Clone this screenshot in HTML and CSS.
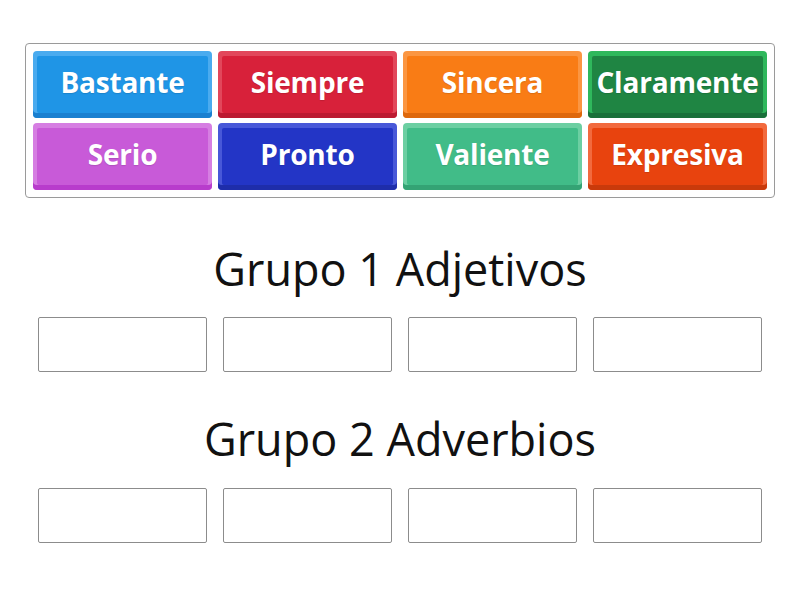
FILE: index.html
```html
<!DOCTYPE html>
<html lang="es">
<head>
<meta charset="utf-8">
<title>Grupos</title>
<link rel="stylesheet" href="styles.css">
</head>
<body>
<div class="bank">
  <div class="tile c-blue"><div class="face">Bastante</div></div>
  <div class="tile c-red"><div class="face">Siempre</div></div>
  <div class="tile c-orange"><div class="face">Sincera</div></div>
  <div class="tile c-dgreen"><div class="face">Claramente</div></div>
  <div class="tile c-purple"><div class="face">Serio</div></div>
  <div class="tile c-navy"><div class="face">Pronto</div></div>
  <div class="tile c-mint"><div class="face">Valiente</div></div>
  <div class="tile c-vermil"><div class="face">Expresiva</div></div>
</div>

<h2 class="group-title first">Grupo 1 Adjetivos</h2>
<div class="slots">
  <div class="slot"></div><div class="slot"></div><div class="slot"></div><div class="slot"></div>
</div>

<h2 class="group-title second">Grupo 2 Adverbios</h2>
<div class="slots">
  <div class="slot"></div><div class="slot"></div><div class="slot"></div><div class="slot"></div>
</div>
</body>
</html>
```

FILE: styles.css
```css
html, body {
  margin: 0;
  padding: 0;
  background: #ffffff;
  font-family: "Open Sans", "Noto Sans", sans-serif;
}

.bank {
  margin: 43px 0 0 25px;
  width: 750px;
  box-sizing: border-box;
  border: 1px solid #9a9a9a;
  border-radius: 4px;
  padding: 7px;
  display: grid;
  grid-template-columns: repeat(4, 179px);
  grid-auto-rows: 67px;
  column-gap: 6px;
  row-gap: 5px;
}

.tile {
  border-radius: 4px;
  padding: 5px 4px 5px 4px;
  box-sizing: border-box;
  display: flex;
  background: var(--rim);
  box-shadow: inset 0 -5px 0 var(--low);
}

.face {
  flex: 1;
  border-radius: 2px;
  background: var(--face);
  display: flex;
  align-items: center;
  justify-content: center;
  padding-bottom: 5px;
  color: #ffffff;
  font-weight: 700;
  font-size: 28px;
  letter-spacing: -0.2px;
  white-space: nowrap;
  text-shadow: 0 1px 1px rgba(0, 0, 0, 0.12);
}

.c-blue   { --rim: #4aabef; --face: #1f95e6; --low: #1a80d0; }
.c-red    { --rim: #e2475b; --face: #d8213a; --low: #bc1a31; }
.c-orange { --rim: #fb9642; --face: #f97c15; --low: #de680c; }
.c-dgreen { --rim: #2fb85c; --face: #1f8543; --low: #19703a; }
.c-purple { --rim: #d67ee2; --face: #c85ad8; --low: #b83ccc; }
.c-navy   { --rim: #4858d8; --face: #2335c6; --low: #1e2daa; }
.c-mint   { --rim: #6ccfa2; --face: #41bc88; --low: #34a374; }
.c-vermil { --rim: #f26a3e; --face: #e8430e; --low: #c93a0b; }

.group-title {
  margin: 0;
  text-align: center;
  font-weight: 400;
  font-size: 45px;
  line-height: 56px;
  color: #111111;
}

.group-title.first { margin-top: 43px; }
.group-title.second { margin-top: 39px; }

.slots {
  margin-top: 20px;
  display: flex;
  justify-content: center;
  gap: 16px;
}

.group-title.second + .slots { margin-top: 21px; }

.slot {
  width: 169px;
  height: 55px;
  box-sizing: border-box;
  border: 1px solid #8c8c8c;
  border-radius: 2px;
  background: #ffffff;
}
```
